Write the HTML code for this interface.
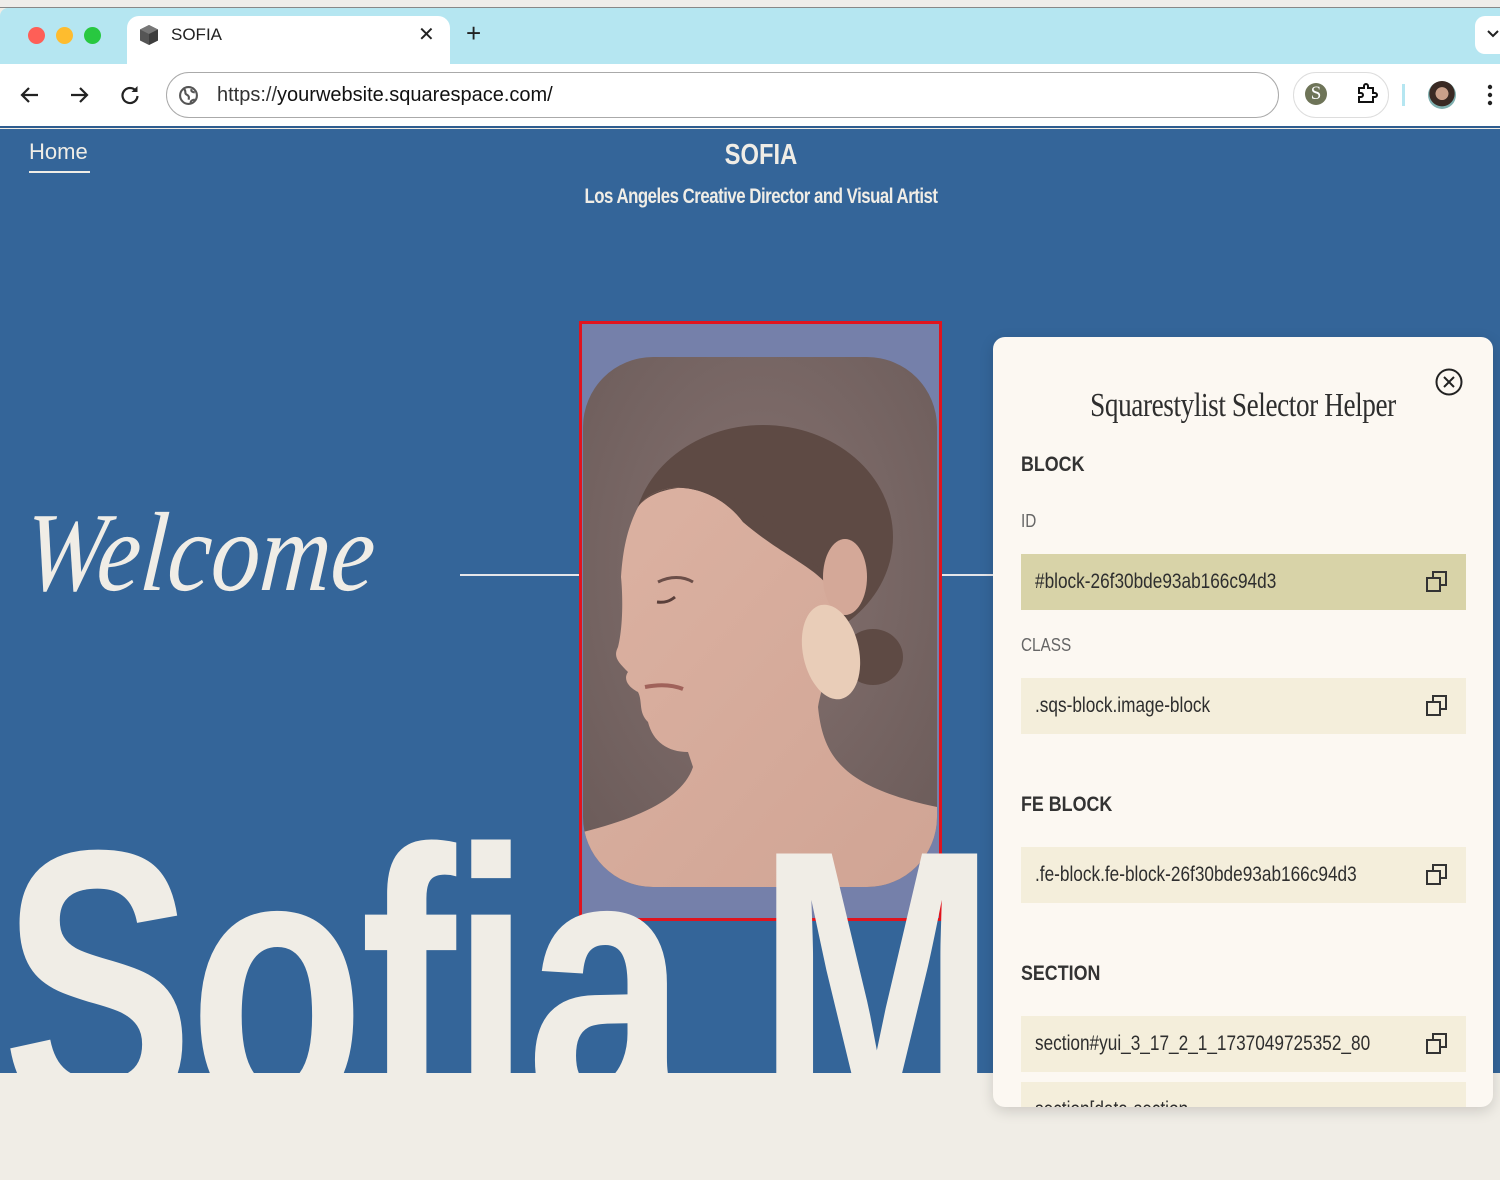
<!DOCTYPE html>
<html><head><meta charset="utf-8"><style>
*{margin:0;padding:0;box-sizing:border-box}
body{width:1500px;height:1180px;overflow:hidden;background:#f0ede6;font-family:"Liberation Sans",sans-serif;position:relative}
.abs{position:absolute}
.narrow{font-family:"Liberation Sans Narrow","Liberation Sans",sans-serif}
.lbl{position:absolute;left:1021px;font-size:21px;font-weight:bold;color:#333;transform-origin:left top;transform:scaleX(.85)}
.sub{position:absolute;left:1021px;font-size:18px;color:#666;transform-origin:left top;transform:scaleX(.85)}
.fld{position:absolute;left:1021px;width:445px;height:56px;background:#f4eedb}
.fld span{position:absolute;left:14px;top:16px;font-size:21px;color:#2e2e2e;white-space:nowrap;transform-origin:left top;transform:scaleX(.82)}
.fld svg{position:absolute;right:18px;top:17px}
</style></head><body>
<div class="abs" style="left:0;top:0;width:1500px;height:8px;background:#efedea;border-bottom:1px solid #888"></div>
<div class="abs" style="left:0;top:8px;width:1500px;height:56px;background:#b5e6f1;border-radius:8px 0 0 0"></div>
<div class="abs" style="left:28px;top:27px;width:17px;height:17px;border-radius:50%;background:#fe5f57"></div>
<div class="abs" style="left:56px;top:27px;width:17px;height:17px;border-radius:50%;background:#febc2e"></div>
<div class="abs" style="left:84px;top:27px;width:17px;height:17px;border-radius:50%;background:#28c840"></div>
<div class="abs" style="left:127px;top:16px;width:323px;height:50px;background:#fff;border-radius:12px 12px 0 0"></div>
<svg class="abs" style="left:137px;top:23px" width="24" height="24" viewBox="0 0 24 24"><path d="M12 2l9 4.5v11L12 22 3 17.5v-11z" fill="#555"/><path d="M3 6.5L12 11l9-4.5L12 2z" fill="#777"/><path d="M12 11v11l9-4.5v-11z" fill="#3d3d3d"/></svg>
<div class="abs" style="left:171px;top:25px;font-size:17px;color:#222">SOFIA</div>
<div class="abs" style="left:418px;top:22px;font-size:20px;color:#222">✕</div>
<div class="abs" style="left:466px;top:18px;font-size:26px;color:#222">+</div>
<div class="abs" style="left:1475px;top:16px;width:40px;height:38px;background:#fff;border-radius:10px"></div>
<svg class="abs" style="left:1486px;top:28px" width="14" height="12"><path d="M2 3l5 5 5-5" stroke="#222" stroke-width="2" fill="none"/></svg>
<div class="abs" style="left:0;top:64px;width:1500px;height:64px;background:#fff;border-bottom:2px solid #2f5d8f"></div>
<svg class="abs" style="left:18px;top:83px" width="24" height="24"><path d="M20 12H5M11 5l-7 7 7 7" stroke="#222" stroke-width="2.2" fill="none"/></svg>
<svg class="abs" style="left:67px;top:83px" width="24" height="24"><path d="M4 12h15M13 5l7 7-7 7" stroke="#222" stroke-width="2.2" fill="none"/></svg>
<svg class="abs" style="left:118px;top:83px" width="24" height="24"><path d="M18 8A7.5 7.5 0 1 0 19.5 13" stroke="#222" stroke-width="2.2" fill="none"/><path d="M19.5 3v6h-6z" fill="#222"/></svg>
<div class="abs" style="left:166px;top:72px;width:1113px;height:46px;border:1.5px solid #aaa;border-radius:23px"></div>
<svg class="abs" style="left:178px;top:85px" width="21" height="21" viewBox="0 0 20 20"><circle cx="10" cy="10" r="8" stroke="#555" stroke-width="2" fill="none"/><path d="M6 4c2 2 0 4 2 5s3 2 2 5M13 4c-1 2 1 3 3 3M12 17c0-2 2-3 4-3" stroke="#555" stroke-width="2" fill="none"/></svg>
<div class="abs" style="left:217px;top:84px;font-size:20px;color:#333">https://<span style="color:#111">yourwebsite.squarespace.com/</span></div>
<div class="abs" style="left:1293px;top:72px;width:96px;height:46px;border:1.5px solid #ddd;border-radius:23px"></div>
<div class="abs" style="left:1305px;top:83px;width:22px;height:22px;border-radius:50%;background:#6e7458;color:#fff;font-family:'Liberation Serif',serif;font-size:19px;text-align:center;line-height:22px">S</div>
<svg class="abs" style="left:1355px;top:82px" width="24" height="24" viewBox="0 0 24 24"><path d="M4 6h5V4a2 2 0 0 1 4 0v2h5v5h2a2 2 0 0 1 0 4h-2v5H4v-5h2a2 2 0 0 0 0-4H4z" stroke="#111" stroke-width="2" fill="none"/></svg>
<div class="abs" style="left:1402px;top:84px;width:3px;height:22px;background:#b5e6f1"></div>
<div class="abs" style="left:1428px;top:81px;width:28px;height:28px;border-radius:50%;background:radial-gradient(circle at 50% 45%,#c9a08a 0 30%,#3a2a24 32% 60%,#7fb0b0 62%)"></div>
<svg class="abs" style="left:1484px;top:83px" width="12" height="24"><circle cx="6" cy="4" r="2.2" fill="#222"/><circle cx="6" cy="12" r="2.2" fill="#222"/><circle cx="6" cy="20" r="2.2" fill="#222"/></svg>

<div class="abs" style="left:0;top:129px;width:1500px;height:944px;background:#346599;overflow:hidden">
  <div class="abs" style="left:29px;top:10px;font-size:22px;color:#f0ede6">Home</div>
  <div class="abs" style="left:29px;top:42px;width:61px;height:2px;background:#f0ede6"></div>
  <div class="abs narrow" style="left:0;width:1522px;top:10px;text-align:center;font-size:29px;font-weight:bold;color:#f0ede6;transform:scaleX(.82)">SOFIA</div>
  <div class="abs narrow" style="left:0;width:1522px;top:56px;text-align:center;font-size:21px;font-weight:bold;color:#f0ede6;letter-spacing:-.6px;transform:scaleX(.8)">Los Angeles Creative Director and Visual Artist</div>
  <div class="abs" style="left:30px;top:360px;font-family:'Liberation Serif',serif;font-style:italic;font-size:98px;color:#f0ede6;transform:scaleY(1.15) skewX(-5deg);transform-origin:left top">Welcome</div>
  <div class="abs" style="left:460px;top:445px;width:540px;height:2px;background:#e6e6ea"></div>
  <div class="abs" style="left:579px;top:192px;width:363px;height:600px;border:3px solid #e0141e;background:#7580aa"></div>
  <svg class="abs" style="left:583px;top:228px" width="354" height="530" viewBox="0 0 354 530">
    <defs><clipPath id="c"><rect width="354" height="530" rx="70"/></clipPath>
    <radialGradient id="bg" cx="50%" cy="40%" r="70%"><stop offset="0" stop-color="#857270"/><stop offset="1" stop-color="#6c5c5a"/></radialGradient>
    <linearGradient id="sk" x1="0" y1="0" x2="1" y2="1"><stop offset="0" stop-color="#dcb2a2"/><stop offset="1" stop-color="#d0a494"/></linearGradient></defs>
    <g clip-path="url(#c)">
      <rect width="354" height="530" fill="url(#bg)"/>
      <ellipse cx="180" cy="180" rx="130" ry="112" fill="#5e4a44"/>
      <ellipse cx="290" cy="300" rx="30" ry="28" fill="#5e4a44"/>
      <path d="M55 150 C75 120 130 125 160 165 C200 200 245 215 250 240 C260 280 240 320 235 350 C240 400 260 430 354 450 V530 H0 V475 C60 460 100 440 110 410 L105 395 C85 395 70 385 65 365 C55 355 60 345 55 335 C45 330 40 322 45 315 C35 305 30 300 35 290 C40 270 40 240 38 220 C40 190 45 170 55 150 Z" fill="url(#sk)"/>
      <path d="M55 150 C75 120 130 125 160 165 C190 190 220 200 235 210 C200 170 150 130 110 130 C80 130 62 140 55 150Z" fill="#5e4a44"/>
      <path d="M75 225c12-6 25-6 35 0" stroke="#6b4e48" stroke-width="3" fill="none"/>
      <path d="M92 240c-5 4 -10 6 -18 5" stroke="#5a3f3a" stroke-width="3" fill="none"/>
      <path d="M62 330c15-3 28 -2 38 2" stroke="#a0625a" stroke-width="4" fill="none"/>
      <ellipse cx="262" cy="220" rx="22" ry="38" fill="#d4a898"/>
      <ellipse cx="248" cy="295" rx="28" ry="48" transform="rotate(-12 248 295)" fill="#e9cdb8"/>
    </g>
  </svg>
  <div class="abs" style="left:2px;top:665px;font-size:383px;font-weight:bold;color:#f0ede6;white-space:nowrap;letter-spacing:-6px;transform:scaleX(.75);transform-origin:left top;line-height:1">Sofia M</div>
</div>

<div class="abs" style="left:993px;top:337px;width:500px;height:770px;background:#fcf8f2;border-radius:12px;box-shadow:0 4px 14px rgba(0,0,0,.15);overflow:hidden">
  <svg class="abs" style="left:441px;top:30px" width="30" height="30"><circle cx="15" cy="15" r="12.5" stroke="#222" stroke-width="2" fill="none"/><path d="M10 10l10 10M20 10l-10 10" stroke="#222" stroke-width="2"/></svg>
  <div class="abs" style="left:0;width:500px;top:50px;text-align:center;font-family:'Liberation Serif',serif;font-size:34px;color:#2e2e2e;transform:scaleX(.8);letter-spacing:-.5px">Squarestylist Selector Helper</div>
</div>
<div class="lbl" style="top:453px">BLOCK</div>
<div class="sub" style="top:511px">ID</div>
<div class="fld" style="top:554px;background:#d8d3a8"><span>#block-26f30bde93ab166c94d3</span><svg width="22" height="22"><rect x="1" y="7" width="13" height="13" stroke="#333" stroke-width="2" fill="none"/><path d="M7 7V1h13v13h-6" stroke="#333" stroke-width="2" fill="none"/></svg></div>
<div class="sub" style="top:635px">CLASS</div>
<div class="fld" style="top:678px"><span>.sqs-block.image-block</span><svg width="22" height="22"><rect x="1" y="7" width="13" height="13" stroke="#333" stroke-width="2" fill="none"/><path d="M7 7V1h13v13h-6" stroke="#333" stroke-width="2" fill="none"/></svg></div>
<div class="lbl" style="top:793px">FE BLOCK</div>
<div class="fld" style="top:847px"><span>.fe-block.fe-block-26f30bde93ab166c94d3</span><svg width="22" height="22"><rect x="1" y="7" width="13" height="13" stroke="#333" stroke-width="2" fill="none"/><path d="M7 7V1h13v13h-6" stroke="#333" stroke-width="2" fill="none"/></svg></div>
<div class="lbl" style="top:962px">SECTION</div>
<div class="fld" style="top:1016px"><span>section#yui_3_17_2_1_1737049725352_80</span><svg width="22" height="22"><rect x="1" y="7" width="13" height="13" stroke="#333" stroke-width="2" fill="none"/><path d="M7 7V1h13v13h-6" stroke="#333" stroke-width="2" fill="none"/></svg></div>
<div class="abs" style="left:993px;top:1082px;width:500px;height:25px;overflow:hidden;border-radius:0 0 12px 12px">
  <div class="fld" style="left:28px;top:0;height:40px"><span style="top:16px">section[data-section</span></div>
</div>
</body></html>
